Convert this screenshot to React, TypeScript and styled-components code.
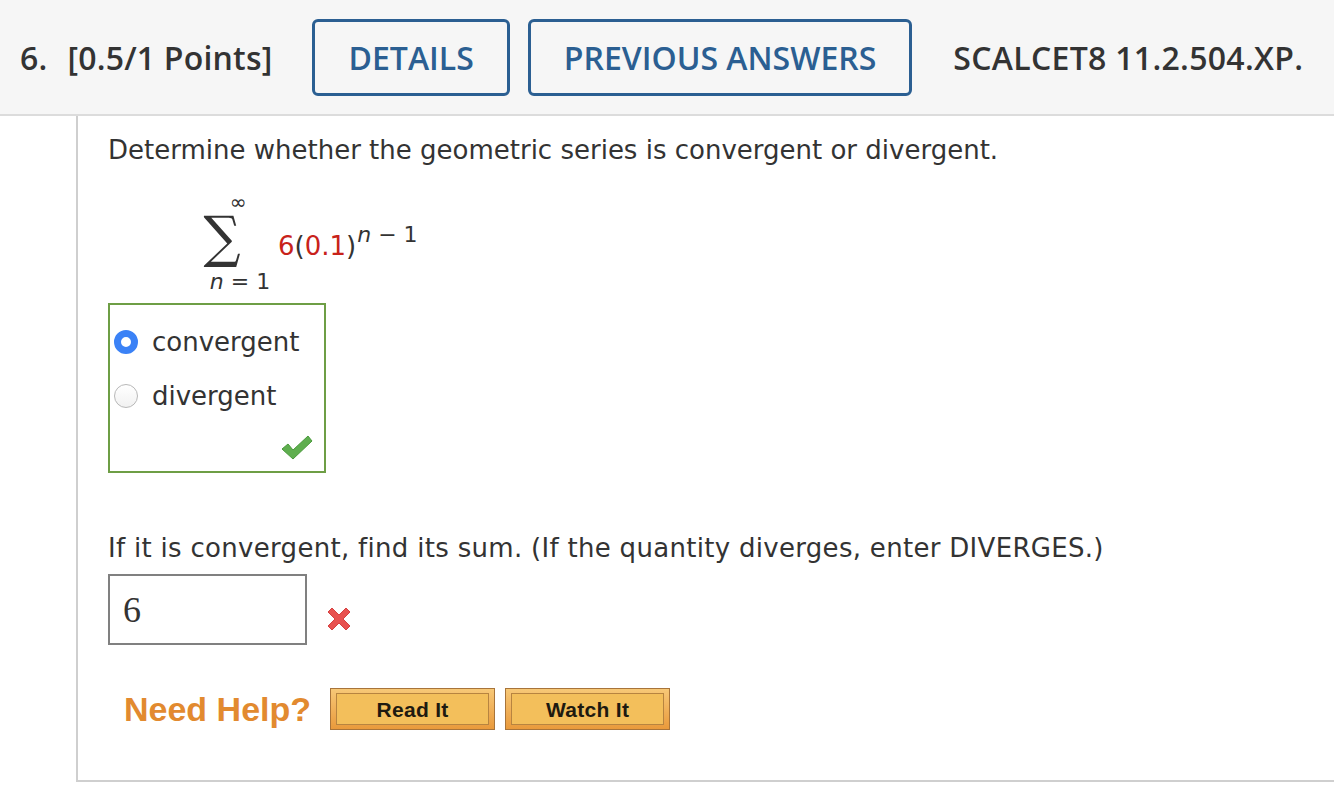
import styled, { createGlobalStyle } from "styled-components";

const GlobalStyle = createGlobalStyle`
  body {
    margin: 0;
    background: #fff;
    font-family: "DejaVu Sans", Verdana, sans-serif;
    color: #333;
  }
`;

const Header = styled.div`
  height: 114px;
  background: #f6f6f6;
  border-bottom: 2px solid #dcdcdc;
  display: flex;
  align-items: center;
  padding-left: 20px;
  font-family: "Open Sans", sans-serif;
  font-weight: 600;
  font-size: 32px;
  color: #333;
`;

const Points = styled.div`
  margin-right: 40px;
  letter-spacing: 0.2px;
  b {
    font-weight: 600;
    margin-right: 20px;
  }
`;

const HeaderButton = styled.div`
  height: 77px;
  box-sizing: border-box;
  display: flex;
  align-items: center;
  padding: 0 33px;
  border: 3px solid #2b5f92;
  border-radius: 6px;
  color: #2b5f92;
  margin-right: 18px;
`;

const Code = styled.div`
  margin-left: 23px;
  letter-spacing: 0.3px;
`;

const Body = styled.div`
  margin-left: 76px;
  border-left: 2px solid #cfcfcf;
  border-bottom: 2px solid #cfcfcf;
  padding: 17px 0 0 30px;
  height: 666px;
  box-sizing: border-box;
`;

const Prompt = styled.p`
  margin: 0;
  font-size: 26px;
  line-height: 34px;
  color: #333;
`;

const Series = styled.div`
  display: flex;
  align-items: center;
  margin: 29px 0 0 94px;
  height: 100px;
`;

const Sum = styled.div`
  display: flex;
  flex-direction: column;
  align-items: center;
  width: 76px;
  color: #333;
`;

const Inf = styled.span`
  font-size: 20px;
  line-height: 12px;
  margin: 0 0 8px -4px;
`;

const Sigma = styled.span`
  font-family: "DejaVu Serif", serif;
  font-size: 52px;
  line-height: 42px;
  margin-left: -36px;
  display: inline-block;
  transform: scaleY(1.08);
`;

const Lower = styled.span`
  font-size: 22px;
  line-height: 28px;
  margin-top: 10px;
`;

const Term = styled.div`
  font-size: 26px;
  margin: -6px 0 0 0;
  color: #333;
  sup {
    font-size: 22px;
    position: relative;
    top: -3px;
    margin-left: 1px;
  }
`;

const Red = styled.span`
  color: #c8221a;
`;

const Choices = styled.div`
  margin-top: 7px;
  width: 218px;
  height: 170px;
  box-sizing: border-box;
  border: 2px solid #6e9e45;
  padding: 10px 0 0 4px;
  position: relative;
`;

const Choice = styled.label`
  display: flex;
  align-items: center;
  height: 54px;
  font-size: 26px;
  color: #333;
  gap: 14px;
`;

const Radio = styled.span<{ checked?: boolean }>`
  width: 24px;
  height: 24px;
  box-sizing: border-box;
  border-radius: 50%;
  border: ${(p) => (p.checked ? "7px solid #3b82f6" : "1px solid #b8b8b8")};
  background: ${(p) =>
    p.checked ? "#fff" : "linear-gradient(#fff, #f1f1f1)"};
`;

const Check = styled.svg`
  position: absolute;
  right: 10px;
  bottom: 10px;
`;

const Question = styled.p`
  margin: 58px 0 0;
  font-size: 26px;
  line-height: 34px;
  letter-spacing: 0.3px;
  color: #333;
`;

const AnswerRow = styled.div`
  display: flex;
  align-items: center;
  margin-top: 9px;
  gap: 18px;
`;

const AnswerBox = styled.div`
  width: 199px;
  height: 71px;
  box-sizing: border-box;
  border: 2px solid #808080;
  padding: 13px 0 0 13px;
  font-family: "Liberation Serif", "Times New Roman", serif;
  font-size: 36px;
  color: #333;
`;

const Cross = styled.svg`
  margin-top: 18px;
`;

const HelpRow = styled.div`
  display: flex;
  align-items: center;
  margin: 43px 0 0 16px;
  gap: 10px;
`;

const NeedHelp = styled.span`
  font-family: "Liberation Sans", Arial, sans-serif;
  font-weight: bold;
  font-size: 34px;
  color: #e28a2f;
  margin-right: 9px;
`;

const HelpButton = styled.div`
  width: 165px;
  height: 42px;
  box-sizing: border-box;
  border: 1px solid #a8743a;
  background: linear-gradient(#f7c877, #e99a3c);
  padding: 4px 5px;
  display: flex;
`;

const HelpInner = styled.div`
  flex: 1;
  border: 1px solid #b78440;
  background: #f3bf5b;
  display: flex;
  align-items: center;
  justify-content: center;
  font-family: "Liberation Sans", Arial, sans-serif;
  font-weight: bold;
  font-size: 21px;
  letter-spacing: 0.3px;
  color: #1e1a10;
  padding-top: 2px;
`;

export default function App() {
  return (
    <>
      <GlobalStyle />
      <Header>
        <Points>
          <b>6.</b>[0.5/1 Points]
        </Points>
        <HeaderButton>DETAILS</HeaderButton>
        <HeaderButton>PREVIOUS ANSWERS</HeaderButton>
        <Code>SCALCET8 11.2.504.XP.</Code>
      </Header>
      <Body>
        <Prompt>Determine whether the geometric series is convergent or divergent.</Prompt>
        <Series>
          <Sum>
            <Inf>∞</Inf>
            <Sigma>∑</Sigma>
            <Lower>
              <i>n</i> = 1
            </Lower>
          </Sum>
          <Term>
            <Red>6</Red>(<Red>0.1</Red>)
            <sup>
              <i>n</i> − 1
            </sup>
          </Term>
        </Series>
        <Choices>
          <Choice>
            <Radio checked />
            convergent
          </Choice>
          <Choice>
            <Radio />
            divergent
          </Choice>
          <Check width="34" height="28" viewBox="0 0 34 28">
            <path
              d="M2 16 L8 11 L13 17 L28 3 L32 8 L13 26 Z"
              fill="#5fae4f"
              stroke="#4a9a3c"
              strokeWidth="1"
              strokeLinejoin="round"
            />
          </Check>
        </Choices>
        <Question>
          If it is convergent, find its sum. (If the quantity diverges, enter DIVERGES.)
        </Question>
        <AnswerRow>
          <AnswerBox>6</AnswerBox>
          <Cross width="28" height="28" viewBox="0 0 28 28">
            <path
              d="M3 7 L7 3 L14 10 L21 3 L25 7 L18 14 L25 21 L21 25 L14 18 L7 25 L3 21 L10 14 Z"
              fill="#e8514f"
              stroke="#d64040"
              strokeWidth="1"
              strokeLinejoin="round"
            />
          </Cross>
        </AnswerRow>
        <HelpRow>
          <NeedHelp>Need Help?</NeedHelp>
          <HelpButton>
            <HelpInner>Read It</HelpInner>
          </HelpButton>
          <HelpButton>
            <HelpInner>Watch It</HelpInner>
          </HelpButton>
        </HelpRow>
      </Body>
    </>
  );
}
